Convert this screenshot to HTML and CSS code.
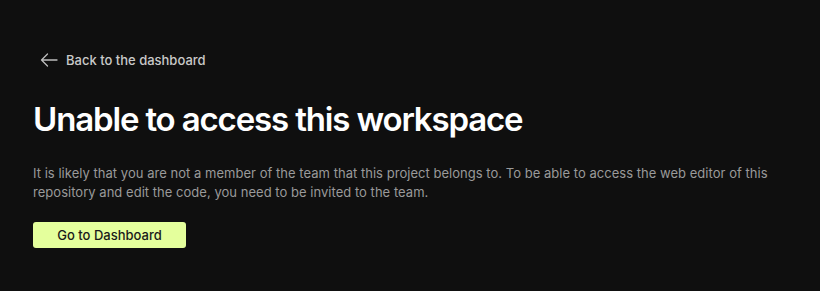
FILE: index.html
```html
<!DOCTYPE html>
<html>
<head>
<meta charset="utf-8">
<link rel="stylesheet" href="styles.css">
</head>
<body>
<main class="page">
  <a class="back" href="#">
    <svg class="back-icon" width="18" height="14" viewBox="0 0 18 14" fill="none" stroke="currentColor" stroke-width="1.3" stroke-linecap="round" stroke-linejoin="round">
      <path d="M17 7H1.5M7.5 1L1.5 7l6 6"/>
    </svg>
    <span>Back to the dashboard</span>
  </a>
  <h1 class="title">Unable to access this workspace</h1>
  <p class="text">It is likely that you are not a member of the team that this project belongs to. To be able to access the web editor of this repository and edit the code, you need to be invited to the team.</p>
  <button class="btn">Go to Dashboard</button>
</main>
</body>
</html>
```
FILE: styles.css
```css
html, body {
  margin: 0;
  background: #0f0f0f;
}
body {
  font-family: Inter, "Noto Sans", sans-serif;
  color: #fff;
}
.page {
  padding: 50px 33px 0 33px;
  display: flex;
  flex-direction: column;
  align-items: flex-start;
}
.back {
  display: flex;
  align-items: center;
  gap: 8px;
  color: #c9c9c9;
  text-decoration: none;
  font-size: 13px;
  font-weight: 500;
  margin-left: 7px;
  height: 20px;
}
.back-icon {
  color: #bdbdbd;
}
.title {
  margin: 25px 0 0 0;
  font-size: 33px;
  font-weight: 600;
  line-height: 48px;
  letter-spacing: -1.15px;
  color: #fff;
}
.text {
  margin: 21px 0 0 0;
  font-size: 13px;
  line-height: 19px;
  letter-spacing: 0.03px;
  color: #9a9a9a;
  max-width: 754px;
}
.btn {
  margin-top: 20px;
  width: 153px;
  height: 26px;
  background: #e4ff9c;
  color: #1a1a1a;
  border: none;
  border-radius: 3px;
  font-family: Inter, sans-serif;
  font-size: 13px;
  font-weight: 500;
  padding: 0;
}
```
